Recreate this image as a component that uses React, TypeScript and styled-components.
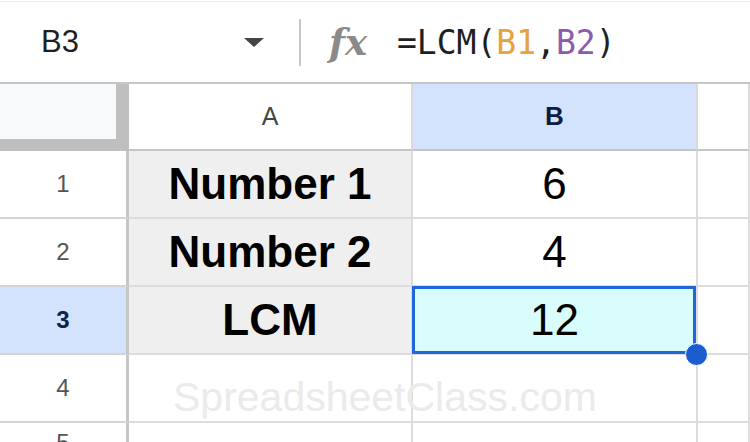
import React from "react";
import styled, { createGlobalStyle } from "styled-components";

const GlobalStyle = createGlobalStyle`
  html, body {
    margin: 0;
    padding: 0;
    background: #fff;
    overflow: hidden;
  }
  body {
    font-family: "Liberation Sans", Arial, sans-serif;
  }
`;

const Page = styled.div`
  width: 750px;
  height: 442px;
  overflow: hidden;
  background: #fff;
`;

const FormulaBar = styled.div`
  display: flex;
  align-items: center;
  height: 80px;
  margin-top: 1px;
  border-top: 1px solid #eeeeee;
  border-bottom: 2px solid #c6c6c6;
`;

const NameBox = styled.div`
  width: 223px;
  padding-left: 41px;
  display: flex;
  align-items: center;
  justify-content: space-between;
`;

const CellRef = styled.span`
  font-size: 31px;
  color: #1f1f1f;
`;

const DropArrow = styled.span`
  width: 0;
  height: 0;
  border-left: 10.5px solid transparent;
  border-right: 10.5px solid transparent;
  border-top: 9px solid #444;
`;

const Divider = styled.span`
  width: 2px;
  height: 47px;
  margin-left: 35px;
  background: #c7c7c7;
`;

const FxIcon = styled.span`
  width: 42px;
  margin-left: 28px;
  font-family: "DejaVu Serif", "Liberation Serif", serif;
  font-style: italic;
  font-weight: bold;
  font-size: 37px;
  line-height: 1;
  color: #8a8a8a;
`;

const Formula = styled.span`
  margin-left: 26px;
  font-family: "DejaVu Sans Mono", "Liberation Mono", monospace;
  font-size: 33px;
  color: #1f1f1f;
`;

const Ref = styled.span<{ $color: string }>`
  color: ${(p) => p.$color};
`;

const Sheet = styled.div`
  position: relative;
  display: grid;
  grid-template-columns: 129px 284px 285px 1fr;
  grid-template-rows: 67px repeat(4, 68px) 42px;
`;

const Corner = styled.div`
  box-sizing: border-box;
  background: #f8f9fa;
  border-right: 13px solid #bfbfbf;
  border-bottom: 12px solid #bfbfbf;
`;

const ColHeader = styled.div<{ $active?: boolean }>`
  box-sizing: border-box;
  display: flex;
  align-items: center;
  justify-content: center;
  background: ${(p) => (p.$active ? "#d3e3fd" : "#fff")};
  border-right: 2px solid #dadada;
  border-bottom: 2px solid #c6c6c6;
  font-size: ${(p) => (p.$active ? "26px" : "25px")};
  font-weight: ${(p) => (p.$active ? "bold" : "normal")};
  color: ${(p) => (p.$active ? "#0b1d45" : "#444746")};
`;

const RowHeader = styled.div<{ $active?: boolean }>`
  box-sizing: border-box;
  display: flex;
  align-items: center;
  justify-content: center;
  background: ${(p) => (p.$active ? "#d3e3fd" : "#fff")};
  border-right: 3px solid #c6c6c6;
  border-bottom: 2px solid #d4d4d4;
  font-size: 24px;
  font-weight: ${(p) => (p.$active ? "bold" : "normal")};
  color: ${(p) => (p.$active ? "#0b2550" : "#555")};
`;

const Cell = styled.div<{ $shade?: boolean; $bold?: boolean }>`
  box-sizing: border-box;
  position: relative;
  display: flex;
  align-items: center;
  justify-content: center;
  background: ${(p) => (p.$shade ? "#efefef" : "#fff")};
  border-right: 2px solid #dcdcdc;
  border-bottom: 2px solid #dcdcdc;
  font-size: 44px;
  font-weight: ${(p) => (p.$bold ? "bold" : "normal")};
  color: #000;
`;

const SelectedCell = styled(Cell)`
  background: #d9fcfc;
  &::after {
    content: "";
    position: absolute;
    top: -1px;
    left: -1px;
    right: 0;
    bottom: -1px;
    border: 3px solid #1d68d6;
  }
`;

const FillHandle = styled.span`
  position: absolute;
  right: -12px;
  bottom: -13px;
  width: 21px;
  height: 21px;
  border-radius: 50%;
  background: #1b5dcf;
  border: 1.5px solid #fff;
  z-index: 2;
`;

const Watermark = styled.div`
  position: absolute;
  top: 293px;
  left: 173px;
  font-size: 41px;
  line-height: 41px;
  color: #ebebeb;
  pointer-events: none;
  white-space: nowrap;
`;

const rows = [
  { n: "1", label: "Number 1", value: "6" },
  { n: "2", label: "Number 2", value: "4" },
  { n: "3", label: "LCM", value: "12", selected: true },
];

export default function App() {
  return (
    <Page>
      <GlobalStyle />
      <FormulaBar>
        <NameBox>
          <CellRef>B3</CellRef>
          <DropArrow />
        </NameBox>
        <Divider />
        <FxIcon>fx</FxIcon>
        <Formula>
          =LCM(<Ref $color="#e8a23c">B1</Ref>,<Ref $color="#8c5aae">B2</Ref>)
        </Formula>
      </FormulaBar>

      <Sheet>
        <Corner />
        <ColHeader>A</ColHeader>
        <ColHeader $active>B</ColHeader>
        <ColHeader />

        {rows.map((row) => (
          <React.Fragment key={row.n}>
            <RowHeader $active={row.selected}>{row.n}</RowHeader>
            <Cell $shade $bold>
              {row.label}
            </Cell>
            {row.selected ? (
              <SelectedCell>
                {row.value}
                <FillHandle />
              </SelectedCell>
            ) : (
              <Cell>{row.value}</Cell>
            )}
            <Cell />
          </React.Fragment>
        ))}

        <RowHeader>4</RowHeader>
        <Cell />
        <Cell />
        <Cell />

        <RowHeader>5</RowHeader>
        <Cell />
        <Cell />
        <Cell />

        <Watermark>SpreadsheetClass.com</Watermark>
      </Sheet>
    </Page>
  );
}
